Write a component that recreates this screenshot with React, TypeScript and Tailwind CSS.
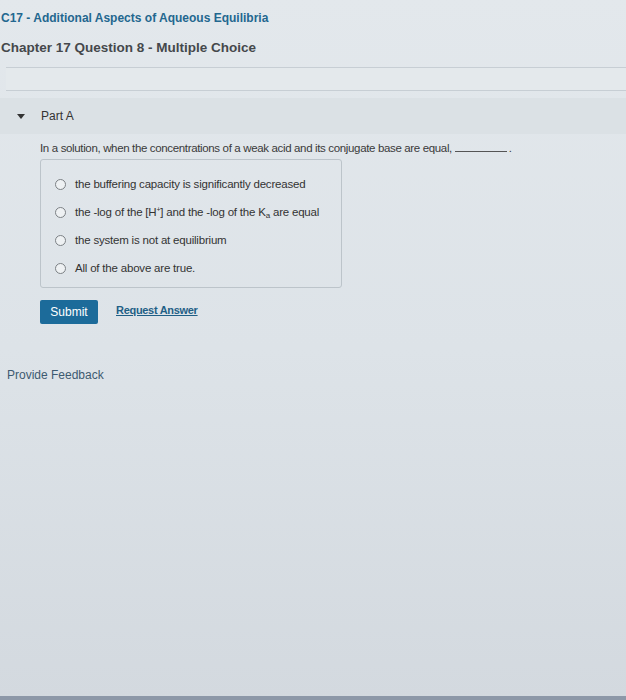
import React from 'react';

const options = [
  { id: 'a', label: <>the buffering capacity is significantly decreased</> },
  {
    id: 'b',
    label: (
      <>
        the -log of the [H<sup className="text-[7px]">+</sup>] and the -log of the K<sub className="text-[8px]">a</sub> are equal
      </>
    ),
  },
  { id: 'c', label: <>the system is not at equilibrium</> },
  { id: 'd', label: <>All of the above are true.</> },
];

export default function App() {
  return (
    <div
      className="w-[626px] h-[700px] overflow-hidden flex flex-col bg-gradient-to-b from-[#e3e8ec] via-[#dde3e8] to-[#d3d9df] text-[#3a3d40]"
      style={{ fontFamily: '"Liberation Sans", Arial, sans-serif' }}
    >
      {/* Header */}
      <div className="pt-[10px]">
        <h2 className="ml-[1px] text-[12px] font-bold text-[#23678f] leading-[16px]">
          C17 - Additional Aspects of Aqueous Equilibria
        </h2>
        <h1 className="ml-[1px] mt-[13px] text-[13.5px] font-bold text-[#45484b] leading-[18px]">
          Chapter 17 Question 8 - Multiple Choice
        </h1>
      </div>

      <div className="mt-[10px] ml-[6px] h-[24px] border-t border-b border-[#c7ced4] bg-[#e4e9ec]" />

      {/* Part A */}
      <div className="mt-[7px] h-[36px] flex items-center bg-[#dbe1e5]">
        <span className="ml-[17px] w-0 h-0 border-l-[4px] border-r-[4px] border-t-[5px] border-l-transparent border-r-transparent border-t-[#333]" />
        <span className="ml-[16px] text-[12px] text-[#333]">Part A</span>
      </div>

      <div className="pl-[40px]">
        <p className="mt-[6px] text-[11.5px] text-[#3a3a3a] tracking-[-0.35px]">
          In a solution, when the concentrations of a weak acid and its conjugate base are equal,{' '}
          <span className="inline-block w-[52px] border-b border-[#555] align-baseline" />
          <span className="ml-[2px]">.</span>
        </p>

        <div className="mt-[2px] w-[302px] border border-[#bcc4ca] rounded-[3px] pt-[16px] pb-[11px] pl-[14px] flex flex-col gap-[12px]">
          {options.map((o) => (
            <label key={o.id} className="flex items-center h-[16px] text-[11.5px] text-[#333] tracking-[-0.2px]">
              <span className="w-[11px] h-[11px] rounded-full border border-[#7c8185] bg-[#eef1f3] mr-[9px]" />
              <span>{o.label}</span>
            </label>
          ))}
        </div>

        <div className="mt-[12px] flex items-center">
          <button className="w-[58px] h-[24px] bg-[#1c6b9a] text-white text-[12px] rounded-[2px]">Submit</button>
          <a className="ml-[18px] -mt-[4px] text-[11px] tracking-[-0.3px] font-bold text-[#1f5f86] underline">Request Answer</a>
        </div>
      </div>

      <div className="mt-[42px] ml-[7px] text-[12px] text-[#3d5a70]">Provide Feedback</div>

      <div className="flex-1" />
      <div className="h-[4px] bg-[#8d98a8]" />
    </div>
  );
}
